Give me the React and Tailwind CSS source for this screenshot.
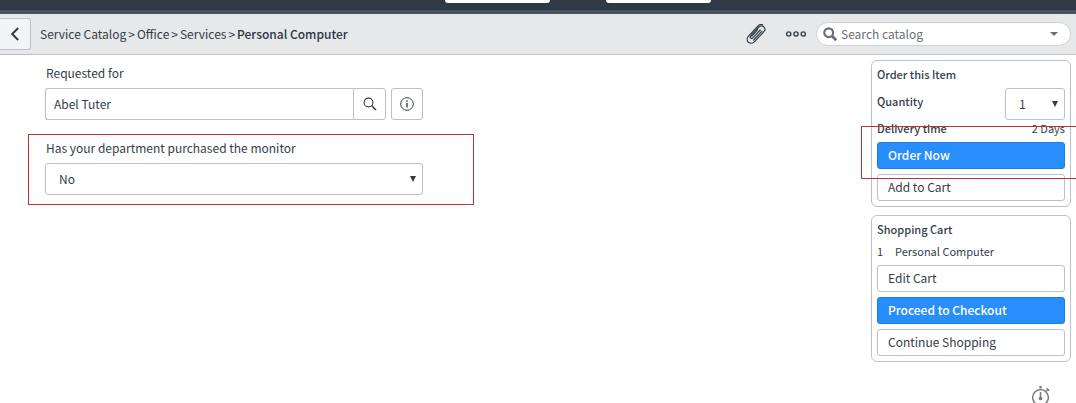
import { useState } from 'react';

const cartItems = [{ quantity: 1, name: 'Personal Computer' }];

const breadcrumbs = ['Service Catalog', 'Office', 'Services'];

const PaperclipIcon = () => (
  <svg className="h-5 w-5" viewBox="0 0 20 20" fill="none" stroke="currentColor" strokeWidth="1.2" strokeLinecap="round" strokeLinejoin="round" aria-hidden="true">
    <path d="M14.200 6 6.900 13.800c-.7.7-1.600.8-2.200.3-.6-.6-.5-1.500.1-2.200L12.900 3.200c1.400-1.500 3.400-1.700 4.900-.4 1.400 1.400 1.400 3.400.1 4.900L8.300 17.800c-1.600 1.700-4.200 1.900-5.900.4-1.600-1.500-1.600-4.100-.1-5.800L12.500 1.500c1.100-1.100 2.600-1.400 4-.9" />
    <path d="M16 7.200 7.700 16" />
    <path d="M11.500 5.800 5.800 12" />
  </svg>
);

const MoreIcon = () => (
  <svg className="h-2 w-5" viewBox="0 0 20 8" fill="none" stroke="currentColor" strokeWidth="1.4" aria-hidden="true">
    <circle cx="2.700" cy="4" r="2.100" />
    <circle cx="10" cy="4" r="2.100" />
    <circle cx="17.300" cy="4" r="2.100" />
  </svg>
);

const StopwatchIcon = () => (
  <svg className="h-6 w-5" viewBox="0 0 20 24" fill="none" stroke="currentColor" strokeWidth="1.500" aria-hidden="true">
    <circle cx="9.500" cy="11.500" r="7.900" />
    <path d="M9.500 6v7" />
    <path d="M8.200 1h2.600M9.500 0v2.600M15.600 2.300l2.600 2.400M15.300 5.200l1.700-1.800" />
    <circle cx="9.500" cy="12.500" r="1.100" fill="currentColor" />
  </svg>
);

const Caret = () => (
  <svg className="pointer-events-none absolute right-1.5 top-3 h-2 w-2" viewBox="0 0 8 8" fill="currentColor" aria-hidden="true">
    <path d="M1 1h6L4 7z" />
  </svg>
);

const CartButton = ({ primary, children }) => (
  <button
    type="button"
    className={`block h-[27px] w-full rounded-[3px] border px-2.5 pb-0.5 text-left text-xs leading-5 ${
      primary
        ? 'border-[#1f7ce0] bg-[#278efc] font-medium text-white'
        : 'border-[#bdc0c4] bg-white text-[#343d47]'
    }`}
  >
    {children}
  </button>
);

const App = () => {
  const [requestedFor, setRequestedFor] = useState('Abel Tuter');
  const [purchased, setPurchased] = useState('No');
  const [quantity, setQuantity] = useState('1');

  return (
    <div className="flex h-screen flex-col overflow-hidden bg-white font-['Noto_Sans_CJK_SC',sans-serif] text-xs text-[#343d47]">
      {/* Banner */}
      <div className="flex h-3.5 shrink-0 items-start justify-center gap-14 border-b-4 border-[#455464] bg-[#303a46] pl-20">
        <div className="h-[3px] w-[105px] rounded-b-sm bg-white" />
        <div className="h-[3px] w-[105px] rounded-b-sm bg-white" />
      </div>

      {/* Header */}
      <header className="flex h-[41px] shrink-0 items-center border-b border-[#bdc0c4] bg-[#e6e8ea] pr-[5px]">
        <button type="button" aria-label="Back" className="flex h-8 w-[31px] items-center justify-center rounded-r-[3px] border border-l-0 border-[#bdc0c4] bg-[#f3f4f5]">
          <svg className="h-3.5 w-2.5" viewBox="0 0 10 14" fill="none" stroke="currentColor" strokeWidth="2" aria-hidden="true">
            <path d="M8.200 1 2.200 7l6 6" />
          </svg>
        </button>
        <nav aria-label="Breadcrumb" className="ml-[9px] flex gap-0.5 leading-5">
          {breadcrumbs.map((crumb) => (
            <span key={crumb} className="flex gap-0.5">
              <a href="#">{crumb}</a>
              <span>&gt;</span>
            </span>
          ))}
          <span className="font-medium text-[#2e3540]">Personal Computer</span>
        </nav>
        <div className="ml-auto flex items-center">
          <button type="button" aria-label="Attachments" className="mr-5">
            <PaperclipIcon />
          </button>
          <button type="button" aria-label="More options" className="mr-2.5">
            <MoreIcon />
          </button>
          <div className="flex h-6 w-[255px] items-center rounded-full border border-[#cfd2d5] bg-white pl-1.5 pr-3 text-[#6b6e72]">
            <svg className="h-3.5 w-3.5 shrink-0" viewBox="0 0 14 14" fill="none" stroke="currentColor" strokeWidth="2.200" aria-hidden="true">
              <circle cx="5.700" cy="5.700" r="4.400" />
              <path d="m9 9 4.200 4.200" strokeWidth="2.800" />
            </svg>
            <input type="search" aria-label="Search catalog" placeholder="Search catalog" className="ml-1 min-w-0 flex-1 leading-5 outline-none placeholder:text-[#6b6e72]" />
            <svg className="h-1 w-2 shrink-0" viewBox="0 0 8 4" fill="currentColor" aria-hidden="true">
              <path d="M0 0h8L4 4z" />
            </svg>
          </div>
        </div>
      </header>

      <div className="flex items-start justify-between pl-7 pr-[5px] pt-[5px]">
        {/* Item variables */}
        <main className="w-[446px]">
          <div className="pl-[17px] pt-[3px]">
            <label htmlFor="requested" className="block pl-px leading-5">Requested for</label>
            <div className="mt-[5px] flex h-8 w-[378px]">
              <input
                id="requested"
                type="text"
                value={requestedFor}
                onChange={(e) => setRequestedFor(e.target.value)}
                className="min-w-0 flex-1 rounded-l-[3px] border border-r-0 border-[#bdc0c4] px-2"
              />
              <button type="button" aria-label="Look up user" className="flex w-[33px] items-center justify-center rounded-r-[3px] border border-[#bdc0c4]">
                <svg className="h-3.5 w-3.5" viewBox="0 0 14 14" fill="none" stroke="currentColor" strokeWidth="1.100" aria-hidden="true">
                  <circle cx="5.500" cy="5.500" r="4.400" />
                  <path d="m8.700 8.700 4.300 4.300" strokeWidth="1.500" />
                </svg>
              </button>
              <button type="button" aria-label="Show details" className="ml-[5px] flex w-8 items-center justify-center rounded-[3px] border border-[#bdc0c4]">
                <svg className="h-3.5 w-3.5" viewBox="0 0 14 14" fill="none" stroke="currentColor" strokeWidth="1" aria-hidden="true">
                  <circle cx="7" cy="7" r="6.300" />
                  <path d="M7 6v4.500M7 3.300v1.500" strokeWidth="1.400" />
                </svg>
              </button>
            </div>
          </div>

          <div className="mt-3.5 border border-[#b8323a] pb-[9px] pl-4 pt-[3px]">
            <label htmlFor="purchased" className="block pl-px leading-5">Has your department purchased the monitor</label>
            <div className="relative mt-[5px] w-[378px]">
              <select
                id="purchased"
                value={purchased}
                onChange={(e) => setPurchased(e.target.value)}
                className="block h-8 w-full appearance-none rounded-[3px] border border-[#bdc0c4] bg-white pl-[13px]"
              >
                <option>No</option>
                <option>Yes</option>
              </select>
              <Caret />
            </div>
          </div>
        </main>

        {/* Order and cart */}
        <aside className="flex w-[200px] flex-col gap-2 text-[11px]">
          <section className="relative rounded-md border border-[#bdc0c4] p-[5px]">
            <h2 className="h-[22px] font-medium leading-4">Order this Item</h2>
            <div className="flex items-start justify-between">
              <label htmlFor="quantity" className="font-medium leading-[26px]">Quantity</label>
              <div className="relative w-[60px]">
                <select
                  id="quantity"
                  value={quantity}
                  onChange={(e) => setQuantity(e.target.value)}
                  className="block h-8 w-full appearance-none rounded-[3px] border border-[#bdc0c4] bg-white pl-[13px] text-xs"
                >
                  <option>1</option>
                  <option>2</option>
                  <option>3</option>
                </select>
                <Caret />
              </div>
            </div>
            <div className="flex h-[22px] justify-between leading-4">
              <span className="font-medium">Delivery time</span>
              <span>2 Days</span>
            </div>
            <div className="flex flex-col gap-[5px]">
              <CartButton primary>Order Now</CartButton>
              <CartButton>Add to Cart</CartButton>
            </div>
            {/* Highlight over the order button */}
            <div className="pointer-events-none absolute -left-[11px] -right-2 top-[65px] h-[53px] border border-[#b8323a]" />
          </section>

          <section className="rounded-md border border-[#bdc0c4] p-[5px]">
            <h2 className="h-[22px] font-medium leading-4">Shopping Cart</h2>
            <ul className="h-[22px]">
              {cartItems.map((item) => (
                <li key={item.name} className="flex gap-3 leading-4">
                  <span>{item.quantity}</span>
                  <span>{item.name}</span>
                </li>
              ))}
            </ul>
            <div className="flex flex-col gap-[5px]">
              <CartButton>Edit Cart</CartButton>
              <CartButton primary>Proceed to Checkout</CartButton>
              <CartButton>Continue Shopping</CartButton>
            </div>
          </section>
        </aside>
      </div>

      <footer className="flex justify-end pr-[25px] pt-6 text-[#77797c]">
        <button type="button" aria-label="Response time">
          <StopwatchIcon />
        </button>
      </footer>
    </div>
  );
};

export default App;
